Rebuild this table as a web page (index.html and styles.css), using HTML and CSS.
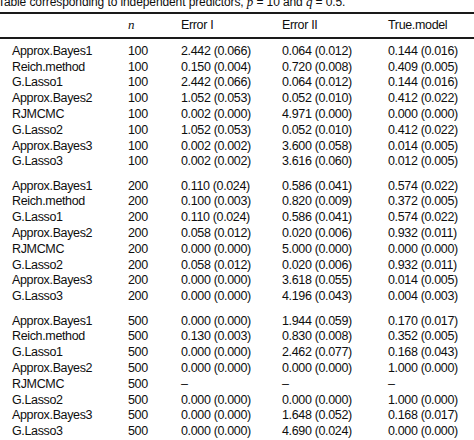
FILE: index.html
```html
<!DOCTYPE html>
<html>
<head>
<meta charset="utf-8">
<link rel="stylesheet" href="styles.css">
</head>
<body>
<div class="page">
  <p class="caption">Table corresponding to independent predictors, <i class="m">p</i> = 10 and <i class="m">q</i> = 0.5.</p>
  <table class="tbl">
    <colgroup>
      <col class="c-label"><col class="c-n"><col class="c-e1"><col class="c-e2"><col class="c-tm">
    </colgroup>
    <thead>
      <tr><th></th><th><i class="m">n</i></th><th>Error I</th><th>Error II</th><th>True.model</th></tr>
    </thead>
    <tbody>
      <tr class="first"><td>Approx.Bayes1</td><td>100</td><td>2.442 (0.066)</td><td>0.064 (0.012)</td><td>0.144 (0.016)</td></tr>
      <tr><td>Reich.method</td><td>100</td><td>0.150 (0.004)</td><td>0.720 (0.008)</td><td>0.409 (0.005)</td></tr>
      <tr><td>G.Lasso1</td><td>100</td><td>2.442 (0.066)</td><td>0.064 (0.012)</td><td>0.144 (0.016)</td></tr>
      <tr><td>Approx.Bayes2</td><td>100</td><td>1.052 (0.053)</td><td>0.052 (0.010)</td><td>0.412 (0.022)</td></tr>
      <tr><td>RJMCMC</td><td>100</td><td>0.002 (0.000)</td><td>4.971 (0.000)</td><td>0.000 (0.000)</td></tr>
      <tr><td>G.Lasso2</td><td>100</td><td>1.052 (0.053)</td><td>0.052 (0.010)</td><td>0.412 (0.022)</td></tr>
      <tr><td>Approx.Bayes3</td><td>100</td><td>0.002 (0.002)</td><td>3.600 (0.058)</td><td>0.014 (0.005)</td></tr>
      <tr><td>G.Lasso3</td><td>100</td><td>0.002 (0.002)</td><td>3.616 (0.060)</td><td>0.012 (0.005)</td></tr>

      <tr class="group"><td>Approx.Bayes1</td><td>200</td><td>0.110 (0.024)</td><td>0.586 (0.041)</td><td>0.574 (0.022)</td></tr>
      <tr><td>Reich.method</td><td>200</td><td>0.100 (0.003)</td><td>0.820 (0.009)</td><td>0.372 (0.005)</td></tr>
      <tr><td>G.Lasso1</td><td>200</td><td>0.110 (0.024)</td><td>0.586 (0.041)</td><td>0.574 (0.022)</td></tr>
      <tr><td>Approx.Bayes2</td><td>200</td><td>0.058 (0.012)</td><td>0.020 (0.006)</td><td>0.932 (0.011)</td></tr>
      <tr><td>RJMCMC</td><td>200</td><td>0.000 (0.000)</td><td>5.000 (0.000)</td><td>0.000 (0.000)</td></tr>
      <tr><td>G.Lasso2</td><td>200</td><td>0.058 (0.012)</td><td>0.020 (0.006)</td><td>0.932 (0.011)</td></tr>
      <tr><td>Approx.Bayes3</td><td>200</td><td>0.000 (0.000)</td><td>3.618 (0.055)</td><td>0.014 (0.005)</td></tr>
      <tr><td>G.Lasso3</td><td>200</td><td>0.000 (0.000)</td><td>4.196 (0.043)</td><td>0.004 (0.003)</td></tr>

      <tr class="group"><td>Approx.Bayes1</td><td>500</td><td>0.000 (0.000)</td><td>1.944 (0.059)</td><td>0.170 (0.017)</td></tr>
      <tr><td>Reich.method</td><td>500</td><td>0.130 (0.003)</td><td>0.830 (0.008)</td><td>0.352 (0.005)</td></tr>
      <tr><td>G.Lasso1</td><td>500</td><td>0.000 (0.000)</td><td>2.462 (0.077)</td><td>0.168 (0.043)</td></tr>
      <tr><td>Approx.Bayes2</td><td>500</td><td>0.000 (0.000)</td><td>0.000 (0.000)</td><td>1.000 (0.000)</td></tr>
      <tr><td>RJMCMC</td><td>500</td><td>–</td><td>–</td><td>–</td></tr>
      <tr><td>G.Lasso2</td><td>500</td><td>0.000 (0.000)</td><td>0.000 (0.000)</td><td>1.000 (0.000)</td></tr>
      <tr><td>Approx.Bayes3</td><td>500</td><td>0.000 (0.000)</td><td>1.648 (0.052)</td><td>0.168 (0.017)</td></tr>
      <tr><td>G.Lasso3</td><td>500</td><td>0.000 (0.000)</td><td>4.690 (0.024)</td><td>0.000 (0.000)</td></tr>
    </tbody>
  </table>
</div>
</body>
</html>
```
FILE: styles.css
```css
html, body {
  margin: 0;
  padding: 0;
  background: #fff;
}
.page {
  width: 474px;
  overflow: hidden;
  font-family: "Liberation Sans", Arial, sans-serif;
  font-size: 12.5px;
  color: #0e0e0e;
  letter-spacing: -0.35px;
}
.caption {
  margin: -5px 0 0 -2px;
  height: 14px;
  line-height: 14px;
  white-space: nowrap;
  font-size: 12px;
  letter-spacing: -0.1px;
}
.m {
  font-family: "Liberation Serif", "Times New Roman", serif;
  font-style: italic;
  font-size: 13px;
}
.tbl {
  margin-top: 3px;
  width: 474px;
  border-collapse: collapse;
  table-layout: fixed;
  border-top: 2px solid #1a1a1a;
}
.c-label { width: 128px; }
.c-n { width: 53px; }
.c-e1 { width: 101px; }
.c-e2 { width: 106px; }
.c-tm { width: 86px; }
.tbl th, .tbl td {
  padding: 0;
  text-align: left;
  font-weight: normal;
  white-space: nowrap;
  line-height: 15.8px;
  height: 15.8px;
}
.tbl td:first-child { padding-left: 12px; }
.tbl thead th {
  padding-top: 3px;
  padding-bottom: 3px;
  border-bottom: 2px solid #1a1a1a;
}
.tbl tr.first td { padding-top: 5px; }
.tbl tr.group td { padding-top: 8.5px; }
```
